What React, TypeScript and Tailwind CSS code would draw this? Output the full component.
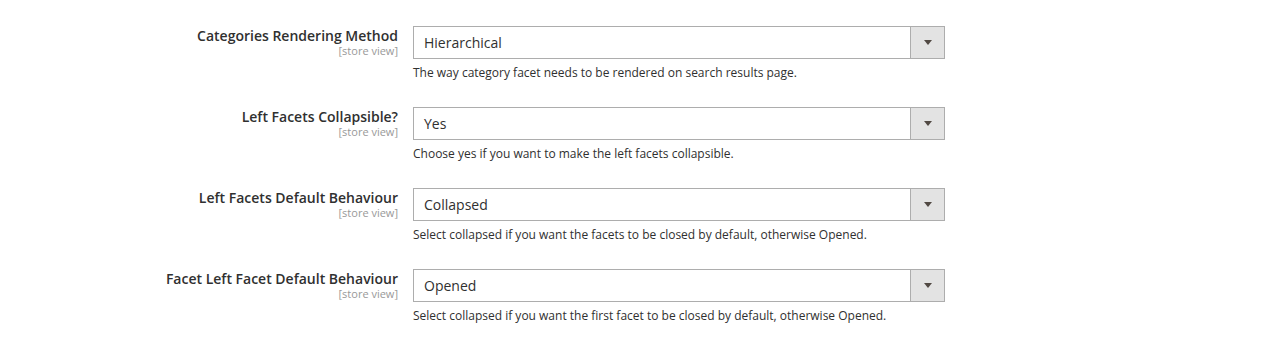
const rows = [
  {
    label: 'Categories Rendering Method',
    value: 'Hierarchical',
    note: 'The way category facet needs to be rendered on search results page.',
  },
  {
    label: 'Left Facets Collapsible?',
    value: 'Yes',
    note: 'Choose yes if you want to make the left facets collapsible.',
  },
  {
    label: 'Left Facets Default Behaviour',
    value: 'Collapsed',
    note: 'Select collapsed if you want the facets to be closed by default, otherwise Opened.',
  },
  {
    label: 'Facet Left Facet Default Behaviour',
    value: 'Opened',
    note: 'Select collapsed if you want the first facet to be closed by default, otherwise Opened.',
  },
];

function SelectBox({ value }: { value: string }) {
  return (
    <div className="flex h-[33px] w-[532px] border border-[#adadad] bg-white">
      <div className="flex flex-1 items-center pl-[10px] text-[14px] text-[#303030]">{value}</div>
      {/* Dropdown toggle */}
      <div className="flex w-[34px] items-center justify-center border-l border-[#adadad] bg-[#e3e3e3]">
        <svg width="8" height="5" viewBox="0 0 8 5">
          <path d="M0 0 H8 L4 5 Z" fill="#514943" />
        </svg>
      </div>
    </div>
  );
}

export default function App() {
  return (
    <div
      className="min-h-[348px] w-full bg-white pt-[26px]"
      style={{ fontFamily: '"Open Sans", "Liberation Sans", sans-serif' }}
    >
      <div className="flex flex-col gap-[25px]">
        {rows.map((row) => (
          <div key={row.label} className="flex gap-[15px]">
            <div className="w-[398px] text-right">
              <div className="text-[14px] font-semibold leading-[19px] text-[#303030]">{row.label}</div>
              <div className="mt-[-1px] text-[11px] leading-[14px] text-[#999999]">[store view]</div>
            </div>
            <div>
              <SelectBox value={row.value} />
              <div className="mt-[4px] text-[12px] leading-[19px] text-[#303030]">{row.note}</div>
            </div>
          </div>
        ))}
      </div>
    </div>
  );
}
